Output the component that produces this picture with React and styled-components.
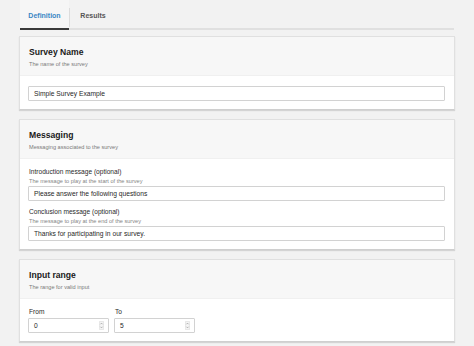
import React from "react";
import styled, { createGlobalStyle } from "styled-components";

const Global = createGlobalStyle`
  html, body { margin: 0; padding: 0; background: #f2f2f2; }
  body { font-family: "Liberation Sans", Arial, Helvetica, sans-serif; color: #222; }
  * { box-sizing: border-box; }
`;

const Page = styled.div`
  padding: 0 19px 0 19px;
  width: 474px;
  height: 346px;
  overflow: hidden;
`;

const TabBar = styled.div`
  display: flex;
  align-items: stretch;
  height: 30px;
  margin: 0 1px;
  border-bottom: 2px solid #e0e0e0;
`;

const Tab = styled.div`
  display: flex;
  align-items: center;
  justify-content: center;
  width: ${(p) => p.$w}px;
  padding-top: 2px;
  font-size: 7px;
  font-weight: bold;
  color: ${(p) => (p.$active ? "#3a86c4" : "#555")};
  border-bottom: 2px solid ${(p) => (p.$active ? "#3a3a3a" : "transparent")};
  margin-bottom: -2px;
  background: ${(p) => (p.$active ? "#f6f6f6" : "transparent")};
`;

const TabSep = styled.div`
  width: 1px;
  background: #dcdcdc;
  margin: 8px 0 1px 0;
`;

const Stack = styled.div`
  display: flex;
  flex-direction: column;
  gap: 9px;
  margin-top: 6px;
`;

const Card = styled.section`
  background: #fff;
  border: 1px solid #e0e0e0;
  border-bottom-color: #cfcfcf;
  box-shadow: 0 1px 1px rgba(0, 0, 0, 0.12);
`;

const CardHeader = styled.div`
  background: #f7f7f7;
  height: 39px;
  padding: 10px 9px 0 9px;
  border-bottom: 1px solid #f0f0f0;
`;

const Title = styled.h2`
  margin: 0;
  font-size: 8.6px;
  line-height: 10px;
  font-weight: bold;
  color: #1a1a1a;
`;

const Desc = styled.p`
  margin: 4px 0 0 0;
  font-size: 5.6px;
  line-height: 6px;
  color: #7a7a7a;
`;

const CardBody = styled.div`
  padding: ${(p) => p.$pt}px 9px ${(p) => p.$pb}px 8px;
  display: flex;
  flex-direction: column;
  gap: 7px;
`;

const Field = styled.div`
  display: flex;
  flex-direction: column;
`;

const Label = styled.label`
  font-size: 6.6px;
  line-height: 8px;
  color: #2a2a2a;
  margin-left: 1px;
`;

const FieldDesc = styled.div`
  font-size: 5.6px;
  line-height: 6px;
  margin: 2px 0 0 1px;
  color: #858585;
`;

const InputBox = styled.div`
  display: flex;
  align-items: center;
  height: 15px;
  width: ${(p) => (p.$w ? `${p.$w}px` : "100%")};
  margin-top: ${(p) => (p.$flush ? 0 : 2)}px;
  border: 1px solid #d2d2d2;
  border-radius: 1px;
  background: #fff;
  padding: 0 4px 0 5px;
  font-size: 6.7px;
  color: #1f1f1f;
`;

const InputText = styled.span`
  flex: 1;
`;

const Row = styled.div`
  display: flex;
  gap: 5px;
`;

const Spinner = () => (
  <svg width="5" height="9" viewBox="0 0 5 9">
    <rect x="0.25" y="0.25" width="4.5" height="8.5" rx="1.2" fill="#f4f4f4" stroke="#cfcfcf" strokeWidth="0.5" />
    <path d="M1.4 3.3 L2.5 2.1 L3.6 3.3" fill="none" stroke="#8c8c8c" strokeWidth="0.6" />
    <path d="M1.4 5.7 L2.5 6.9 L3.6 5.7" fill="none" stroke="#8c8c8c" strokeWidth="0.6" />
  </svg>
);

const NumberInput = ({ value }) => (
  <InputBox $w={81}>
    <InputText>{value}</InputText>
    <Spinner />
  </InputBox>
);

export default function App() {
  return (
    <Page>
      <Global />
      <TabBar>
        <Tab $active $w={49}>Definition</Tab>
        <TabSep />
        <Tab $w={46}>Results</Tab>
      </TabBar>
      <Stack>
        <Card>
          <CardHeader>
            <Title>Survey Name</Title>
            <Desc>The name of the survey</Desc>
          </CardHeader>
          <CardBody $pt={10} $pb={8}>
            <InputBox $flush>
              <InputText>Simple Survey Example</InputText>
            </InputBox>
          </CardBody>
        </Card>
        <Card>
          <CardHeader>
            <Title>Messaging</Title>
            <Desc>Messaging associated to the survey</Desc>
          </CardHeader>
          <CardBody $pt={9} $pb={8}>
            <Field>
              <Label>Introduction message (optional)</Label>
              <FieldDesc>The message to play at the start of the survey</FieldDesc>
              <InputBox>
                <InputText>Please answer the following questions</InputText>
              </InputBox>
            </Field>
            <Field>
              <Label>Conclusion message (optional)</Label>
              <FieldDesc>The message to play at the end of the survey</FieldDesc>
              <InputBox>
                <InputText>Thanks for participating in our survey.</InputText>
              </InputBox>
            </Field>
          </CardBody>
        </Card>
        <Card>
          <CardHeader>
            <Title>Input range</Title>
            <Desc>The range for valid input</Desc>
          </CardHeader>
          <CardBody $pt={9} $pb={8}>
            <Row>
              <Field>
                <Label>From</Label>
                <NumberInput value="0" />
              </Field>
              <Field>
                <Label>To</Label>
                <NumberInput value="5" />
              </Field>
            </Row>
          </CardBody>
        </Card>
      </Stack>
    </Page>
  );
}
